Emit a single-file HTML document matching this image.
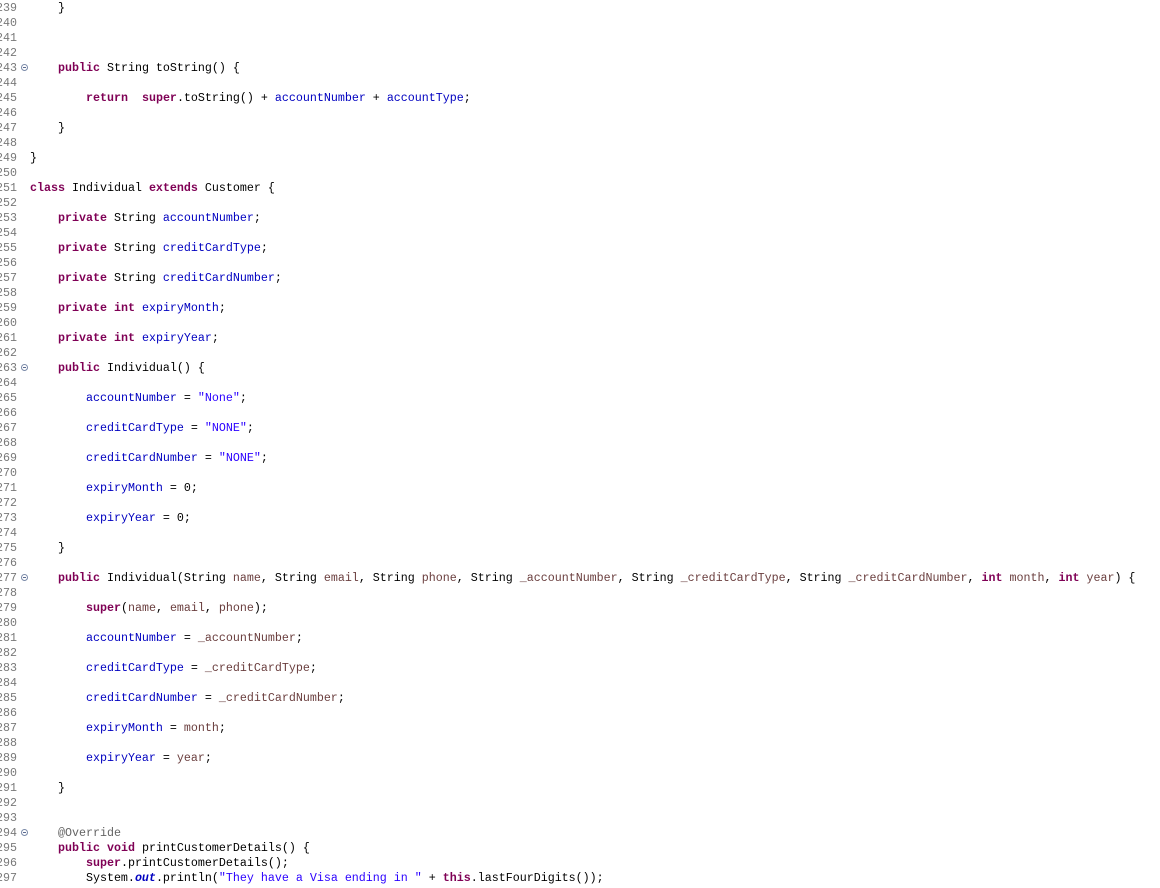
<!DOCTYPE html>
<html><head><meta charset="utf-8"><style>
body{margin:0;width:1160px;height:888px;overflow:hidden;background:#fff;font-family:"Liberation Mono",monospace;font-size:11.67px;}
.r{position:absolute;left:0;height:15px;line-height:15px;white-space:pre;width:1160px}
.n{position:absolute;left:-4px;color:#787878}
.c{position:absolute;left:30px;color:#000}
.k{color:#7f0055;font-weight:bold}
.f{color:#0000c0}
.s{color:#2a00ff}
.p{color:#6a3e3e}
.a{color:#646464}
.o{color:#0000c0;font-weight:bold;font-style:italic}
.fold{position:absolute;left:21px;top:3px;width:7px;height:7px;border:1px solid #7a8aa8;border-radius:50%;box-sizing:border-box}
.fold:after{content:"";position:absolute;left:1px;top:2px;width:3px;height:1px;background:#5a6a90}
</style></head><body>
<div id="w"></div>
<script>
var L=[
'    }','','','',
'    <span class="k">public</span> String toString() {','',
'        <span class="k">return</span>  <span class="k">super</span>.toString() + <span class="f">accountNumber</span> + <span class="f">accountType</span>;','',
'    }','','}','',
'<span class="k">class</span> Individual <span class="k">extends</span> Customer {','',
'    <span class="k">private</span> String <span class="f">accountNumber</span>;','',
'    <span class="k">private</span> String <span class="f">creditCardType</span>;','',
'    <span class="k">private</span> String <span class="f">creditCardNumber</span>;','',
'    <span class="k">private</span> <span class="k">int</span> <span class="f">expiryMonth</span>;','',
'    <span class="k">private</span> <span class="k">int</span> <span class="f">expiryYear</span>;','',
'    <span class="k">public</span> Individual() {','',
'        <span class="f">accountNumber</span> = <span class="s">"None"</span>;','',
'        <span class="f">creditCardType</span> = <span class="s">"NONE"</span>;','',
'        <span class="f">creditCardNumber</span> = <span class="s">"NONE"</span>;','',
'        <span class="f">expiryMonth</span> = 0;','',
'        <span class="f">expiryYear</span> = 0;','',
'    }','',
'    <span class="k">public</span> Individual(String <span class="p">name</span>, String <span class="p">email</span>, String <span class="p">phone</span>, String <span class="p">_accountNumber</span>, String <span class="p">_creditCardType</span>, String <span class="p">_creditCardNumber</span>, <span class="k">int</span> <span class="p">month</span>, <span class="k">int</span> <span class="p">year</span>) {','',
'        <span class="k">super</span>(<span class="p">name</span>, <span class="p">email</span>, <span class="p">phone</span>);','',
'        <span class="f">accountNumber</span> = <span class="p">_accountNumber</span>;','',
'        <span class="f">creditCardType</span> = <span class="p">_creditCardType</span>;','',
'        <span class="f">creditCardNumber</span> = <span class="p">_creditCardNumber</span>;','',
'        <span class="f">expiryMonth</span> = <span class="p">month</span>;','',
'        <span class="f">expiryYear</span> = <span class="p">year</span>;','',
'    }','','',
'    <span class="a">@Override</span>',
'    <span class="k">public</span> <span class="k">void</span> printCustomerDetails() {',
'        <span class="k">super</span>.printCustomerDetails();',
'        System.<span class="o">out</span>.println(<span class="s">"They have a Visa ending in "</span> + <span class="k">this</span>.lastFourDigits());'
];
var folds={243:1,263:1,277:1,294:1};
var h='';
for(var i=0;i<L.length;i++){var n=239+i;
h+='<div class="r" style="top:'+(i*15+1)+'px"><span class="n">'+n+'</span>'+(folds[n]?'<span class="fold"></span>':'')+'<span class="c">'+L[i]+'</span></div>';}
document.getElementById('w').innerHTML=h;
</script>
</body></html>
